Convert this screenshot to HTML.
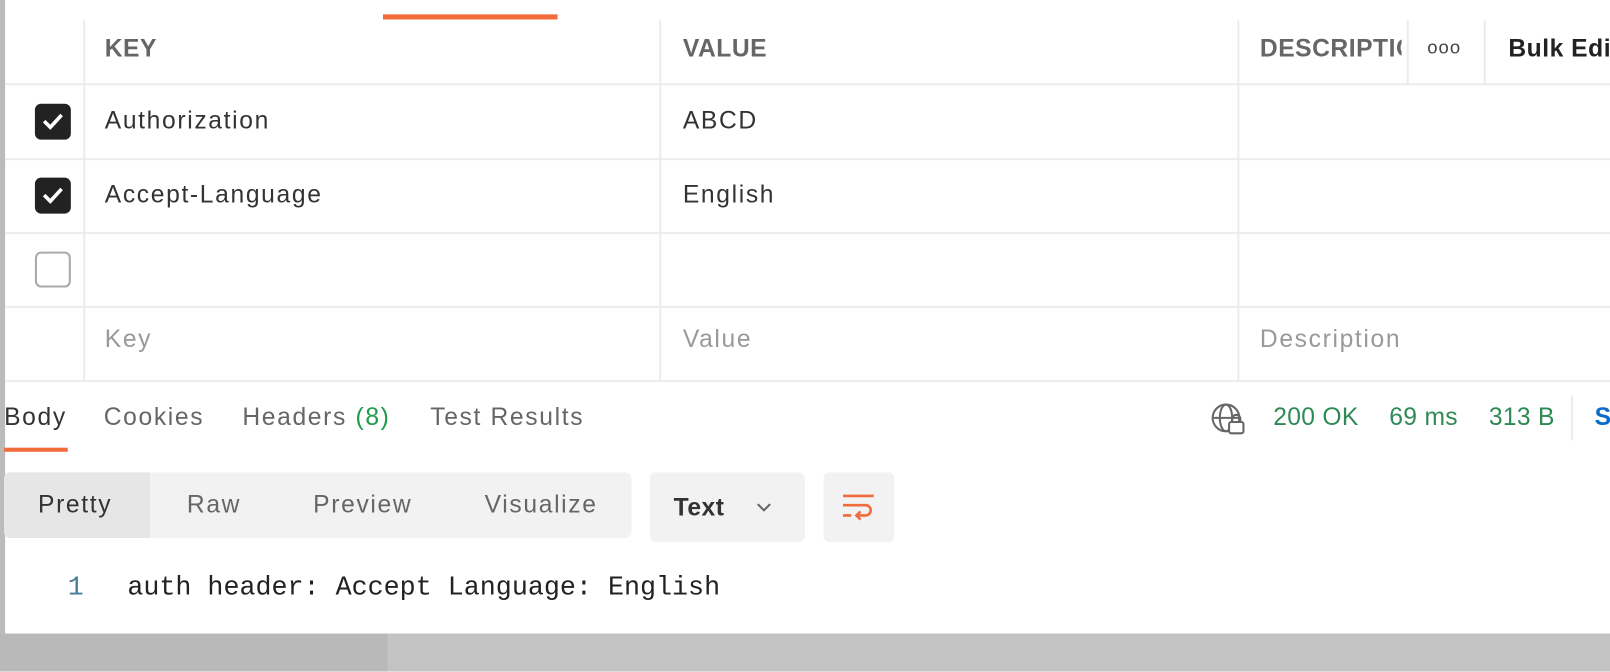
<!DOCTYPE html><html><head><style>
body{margin:0;width:1610px;height:654px;overflow:hidden;background:#fff;font-family:"Liberation Sans",sans-serif;position:relative}
#w{position:absolute;left:0;top:0;width:1568px;height:637px;transform:scale(1.0268);transform-origin:0 0}
.a{position:absolute;white-space:nowrap}
.hl{position:absolute;height:2px;background:#ececec}
.vl{position:absolute;width:2px;background:#ececec}
.cb{position:absolute;left:34px;width:35px;height:35px;border-radius:6px;background:#222;box-sizing:border-box}
.t{font-size:24px;color:#333;letter-spacing:1.6px}
.g{color:#999}
</style></head><body><div id="w">
<div class="a" style="left:0;top:0;width:5px;height:617px;background:#bbb"></div>
<div class="a" style="left:373px;top:14px;width:170px;height:5px;background:#f26b3a"></div>
<div class="hl" style="left:5px;top:81px;width:1605px"></div>
<div class="hl" style="left:5px;top:154px;width:1605px"></div>
<div class="hl" style="left:5px;top:226px;width:1605px"></div>
<div class="hl" style="left:5px;top:298px;width:1605px"></div>
<div class="hl" style="left:5px;top:370px;width:1605px"></div>
<div class="vl" style="left:81px;top:20px;height:350px"></div>
<div class="vl" style="left:642px;top:20px;height:350px"></div>
<div class="vl" style="left:1205px;top:20px;height:350px"></div>
<div class="vl" style="left:1370px;top:20px;height:62px"></div>
<div class="vl" style="left:1445px;top:20px;height:62px"></div>
<div class="a t" style="left:102px;top:34px;color:#666;font-weight:bold;letter-spacing:0.5px">KEY</div>
<div class="a t" style="left:665px;top:34px;color:#666;font-weight:bold;letter-spacing:0.5px">VALUE</div>
<div class="a t" style="left:1227px;top:34px;color:#666;font-weight:bold;letter-spacing:0.5px;width:138px;overflow:hidden">DESCRIPTION</div>
<div class="a" style="left:1390px;top:36px;font-size:18px;color:#444;letter-spacing:1px">ooo</div>
<div class="a t" style="left:1469px;top:34px;color:#222;font-weight:bold;letter-spacing:0.5px">Bulk Edit</div>
<div class="cb" style="top:101px"><svg width="35" height="35"><path d="M9 17l6 6 11-12" stroke="#fff" stroke-width="3.5" fill="none"/></svg></div>
<div class="cb" style="top:173px"><svg width="35" height="35"><path d="M9 17l6 6 11-12" stroke="#fff" stroke-width="3.5" fill="none"/></svg></div>
<div class="cb" style="top:245px;background:#fff;border:2px solid #aaa"></div>
<div class="a t" style="left:102px;top:104px">Authorization</div>
<div class="a t" style="left:665px;top:104px">ABCD</div>
<div class="a t" style="left:102px;top:176px">Accept-Language</div>
<div class="a t" style="left:665px;top:176px">English</div>
<div class="a t g" style="left:102px;top:317px">Key</div>
<div class="a t g" style="left:665px;top:317px">Value</div>
<div class="a t g" style="left:1227px;top:317px">Description</div>
<div class="a t" style="left:4px;top:393px">Body</div>
<div class="a" style="left:4px;top:436px;width:62px;height:4px;background:#f26b3a"></div>
<div class="a t" style="left:101px;top:393px;color:#666">Cookies</div>
<div class="a t" style="left:236px;top:393px;color:#666">Headers <span style="color:#1d9a4a">(8)</span></div>
<div class="a t" style="left:419px;top:393px;color:#666">Test Results</div>
<svg class="a" style="left:1178px;top:391px" width="38" height="36"><circle cx="16" cy="16" r="13" stroke="#666" stroke-width="2" fill="none"/><ellipse cx="16" cy="16" rx="6" ry="13" stroke="#666" stroke-width="2" fill="none"/><path d="M3 16h26" stroke="#666" stroke-width="2"/><rect x="19" y="20" width="14" height="11" rx="2" fill="#fff" stroke="#666" stroke-width="2"/><path d="M22 20v-3a4 4 0 0 1 8 0v3" stroke="#666" stroke-width="2" fill="none"/></svg>
<div class="a t" style="left:1240px;top:393px;color:#2f8a55;letter-spacing:0.3px">200 OK</div>
<div class="a t" style="left:1353px;top:393px;color:#2f8a55;letter-spacing:0.3px">69 ms</div>
<div class="a t" style="left:1450px;top:393px;color:#2f8a55;letter-spacing:0.3px">313 B</div>
<div class="vl" style="left:1530px;top:385px;height:44px"></div>
<div class="a t" style="left:1553px;top:393px;color:#0b6bcb;font-weight:bold">S</div>
<div class="a" style="left:4px;top:460px;width:611px;height:64px;background:#f2f2f2;border-radius:6px"></div>
<div class="a" style="left:4px;top:460px;width:142px;height:64px;background:#e6e6e6;border-radius:6px 0 0 6px"></div>
<div class="a t" style="left:37px;top:478px;color:#333">Pretty</div>
<div class="a t" style="left:182px;top:478px;color:#666">Raw</div>
<div class="a t" style="left:305px;top:478px;color:#666">Preview</div>
<div class="a t" style="left:472px;top:478px;color:#666">Visualize</div>
<div class="a" style="left:633px;top:460px;width:151px;height:68px;background:#f2f2f2;border-radius:6px"></div>
<div class="a t" style="left:656px;top:481px;color:#333;font-weight:bold;letter-spacing:0.5px">Text</div>
<svg class="a" style="left:736px;top:488px" width="16" height="12"><path d="M2 3l6 6 6-6" stroke="#666" stroke-width="2" fill="none"/></svg>
<div class="a" style="left:802px;top:460px;width:69px;height:68px;background:#f2f2f2;border-radius:6px"></div>
<svg class="a" style="left:818px;top:476px" width="38" height="38"><path d="M3 7h30M3 16h22a5 5 0 0 1 0 10h-8M20 22l-4 4 4 4M3 26h8" stroke="#f26b3a" stroke-width="2.5" fill="none"/></svg>
<div class="a" style="left:66px;top:557px;font-size:26px;color:#4a7a99;font-family:'Liberation Mono',monospace">1</div>
<div class="a" style="left:124px;top:557px;font-size:26px;color:#222;font-family:'Liberation Mono',monospace;letter-spacing:0px">auth header: Accept Language: English</div>
<div class="a" style="left:0;top:617px;width:378px;height:37px;background:#b9b9b9"></div>
<div class="a" style="left:378px;top:617px;width:1232px;height:37px;background:#c3c3c3"></div>
</div></body></html>
